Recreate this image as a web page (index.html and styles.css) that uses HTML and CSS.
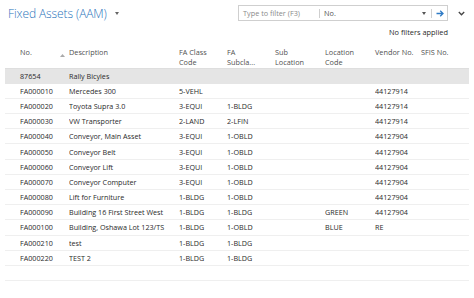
FILE: index.html
```html
<!DOCTYPE html>
<html>
	<head>
		<meta charset="UTF-8">
		<title>Fixed Assets (AAM)</title>
		<link rel="stylesheet" href="styles.css">
	</head>
	<body>
		<div class="top">
			<div class="title">Fixed Assets (AAM)<span class="caret"><svg width="4" height="3" viewBox="0 0 4 3"><polygon points="0,0 4,0 2,3" fill="#666"/></svg></span></div>
			<div class="filter">
				<span class="hint">Type to filter (F3)</span>
				<span class="field">No.</span>
				<span class="drop"><svg width="4" height="3" viewBox="0 0 4 3"><polygon points="0,0 4,0 2,3" fill="#555"/></svg></span>
				<span class="go"><svg width="8" height="7" viewBox="0 0 8 7"><path d="M0.5 3.5H7M4.2 0.8L7 3.5L4.2 6.2" fill="none" stroke="#2f7bc6" stroke-width="1.3"/></svg></span>
			</div>
			<span class="more"><svg width="7" height="5" viewBox="0 0 7 5"><path d="M0.8 1L3.5 3.8L6.2 1" fill="none" stroke="#444" stroke-width="1.3"/></svg></span>
		</div>
		<div class="status">No filters applied</div>
		<table class="grid">
			<colgroup>
				<col class="c1"><col class="c2"><col class="c3"><col class="c4"><col class="c5"><col class="c6"><col class="c7"><col class="c8">
			</colgroup>
			<thead>
				<tr>
					<th><div class="sort">No.<span class="arrow"><svg width="5" height="3" viewBox="0 0 5 3"><polygon points="0,3 5,3 2.5,0" fill="#aaa"/></svg></span></div></th>
					<th>Description</th>
					<th>FA Class<br>Code</th>
					<th>FA<br>Subcla...</th>
					<th>Sub<br>Location</th>
					<th>Location<br>Code</th>
					<th>Vendor No.</th>
					<th>SFIS No.</th>
				</tr>
			</thead>
			<tbody>
				<tr class="current"><td>87654</td><td>Rally Bicyles</td><td></td><td></td><td></td><td></td><td></td><td></td></tr>
				<tr><td>FA000010</td><td>Mercedes 300</td><td>5-VEHL</td><td></td><td></td><td></td><td>44127914</td><td></td></tr>
				<tr><td>FA000020</td><td>Toyota Supra 3.0</td><td>3-EQUI</td><td>1-BLDG</td><td></td><td></td><td>44127914</td><td></td></tr>
				<tr><td>FA000030</td><td>VW Transporter</td><td>2-LAND</td><td>2-LFIN</td><td></td><td></td><td>44127914</td><td></td></tr>
				<tr><td>FA000040</td><td>Conveyor, Main Asset</td><td>3-EQUI</td><td>1-OBLD</td><td></td><td></td><td>44127904</td><td></td></tr>
				<tr><td>FA000050</td><td>Conveyor Belt</td><td>3-EQUI</td><td>1-OBLD</td><td></td><td></td><td>44127904</td><td></td></tr>
				<tr><td>FA000060</td><td>Conveyor Lift</td><td>3-EQUI</td><td>1-OBLD</td><td></td><td></td><td>44127904</td><td></td></tr>
				<tr><td>FA000070</td><td>Conveyor Computer</td><td>3-EQUI</td><td>1-OBLD</td><td></td><td></td><td>44127904</td><td></td></tr>
				<tr><td>FA000080</td><td>Lift for Furniture</td><td>1-BLDG</td><td>1-OBLD</td><td></td><td></td><td>44127904</td><td></td></tr>
				<tr><td>FA000090</td><td>Building 16 First Street West</td><td>1-BLDG</td><td>1-BLDG</td><td></td><td>GREEN</td><td>44127904</td><td></td></tr>
				<tr><td>FA000100</td><td>Building, Oshawa Lot 123/TS</td><td>1-BLDG</td><td>1-OBLD</td><td></td><td>BLUE</td><td>RE</td><td></td></tr>
				<tr><td>FA000210</td><td>test</td><td>1-BLDG</td><td>1-BLDG</td><td></td><td></td><td></td><td></td></tr>
				<tr><td>FA000220</td><td>TEST 2</td><td>1-BLDG</td><td>1-BLDG</td><td></td><td></td><td></td><td></td></tr>
				<tr class="empty"><td></td><td></td><td></td><td></td><td></td><td></td><td></td><td></td></tr>
			</tbody>
		</table>
	</body>
</html>
```

FILE: styles.css
```css
*{
	margin: 0;
	padding: 0;
	box-sizing: border-box;
}
body{
	background: #fff;
	font-family: "Open Sans", "Noto Sans", sans-serif;
	font-size: 7.2px;
	color: #2a2a2a;
}
.top{
	display: flex;
	align-items: center;
	height: 26px;
	padding: 0 8px 0 8px;
}
.title{
	display: flex;
	align-items: center;
	font-size: 12px;
	font-weight: 300;
	color: #2b74bb;
	letter-spacing: -0.1px;
}
.title .caret{
	display: flex;
	margin-left: 8px;
	margin-top: 1px;
}
.filter{
	margin-left: auto;
	width: 210px;
	height: 16px;
	border: 1px solid #cfcfcf;
	display: flex;
	align-items: center;
	color: #8a8a8a;
	font-size: 7.3px;
}
.filter .hint{
	width: 81px;
	padding-left: 4px;
	border-right: 1px solid #cfcfcf;
	line-height: 9px;
}
.filter .field{
	flex: 1;
	padding-left: 4px;
	color: #555;
}
.filter .drop{
	display: flex;
	padding-right: 5px;
	border-right: 1px solid #cfcfcf;
	height: 9px;
	align-items: center;
}
.filter .go{
	display: flex;
	padding: 0 3px 0 4px;
}
.more{
	display: flex;
	margin-left: 10px;
	margin-right: 1px;
}
.status{
	text-align: right;
	padding-right: 26px;
	height: 20px;
	line-height: 12px;
	color: #2a2a2a;
	font-size: 7.4px;
}
.grid{
	margin-left: 5px;
	width: 464px;
	table-layout: fixed;
	border-collapse: collapse;
}
.grid .c1{ width: 64px; }
.grid .c2{ width: 110px; }
.grid .c3{ width: 48px; }
.grid .c4{ width: 48px; }
.grid .c5{ width: 50px; }
.grid .c6{ width: 50px; }
.grid .c7{ width: 46px; }
.grid th{
	font-weight: normal;
	text-align: left;
	vertical-align: top;
	color: #505050;
	font-size: 7.3px;
	line-height: 10px;
	height: 22px;
	padding: 1px 0 0 0;
	border-bottom: 1px solid #dedede;
	white-space: nowrap;
}
.grid th:first-child,
.grid td:first-child{
	padding-left: 15px;
}
.grid .sort{
	display: flex;
	align-items: center;
}
.grid .sort .arrow{
	display: flex;
	margin-left: auto;
	margin-right: 4px;
	margin-top: 7px;
}
.grid td{
	height: 15.2px;
	padding: 0;
	line-height: 14px;
	border-bottom: 1px solid #efefef;
	white-space: nowrap;
	overflow: hidden;
}
.grid tr.current td{
	background: #e5e5e5;
	border-bottom-color: #e5e5e5;
}
```
